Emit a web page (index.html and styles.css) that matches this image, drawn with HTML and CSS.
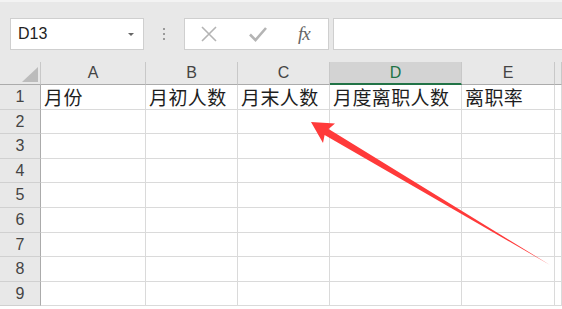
FILE: index.html
```html
<!DOCTYPE html>
<html lang="zh-CN">
<head>
  <meta charset="UTF-8" />
  <title>工作表</title>
  <link rel="stylesheet" href="styles.css">
</head>
<body>
  <div class="toolbar">
    <div class="namebox">
      <span>D13</span>
      <span class="caret"></span>
    </div>
    <div class="grip"><i></i><i></i><i></i></div>
    <div class="fxbox">
      <svg class="tool" width="18" height="18" viewBox="0 0 18 18"><path d="M2 2L16 16M16 2L2 16" stroke="#b4b4b4" stroke-width="1.6" fill="none"/></svg>
      <svg class="tool" width="20" height="18" viewBox="0 0 20 18"><path d="M2 9.5L7.5 15L18 3" stroke="#b4b4b4" stroke-width="2.6" fill="none"/></svg>
      <span class="fx">fx</span>
    </div>
    <div class="formula"></div>
  </div>

  <div class="sheet">
    <div class="corner"><span class="tri"></span></div>
    <div class="colhead">A</div>
    <div class="colhead">B</div>
    <div class="colhead">C</div>
    <div class="colhead active">D</div>
    <div class="colhead">E</div>
    <div class="colhead"></div>

    <div class="rowhead">1</div>
    <div class="cell">月份</div>
    <div class="cell">月初人数</div>
    <div class="cell">月末人数</div>
    <div class="cell">月度离职人数</div>
    <div class="cell">离职率</div>
    <div class="cell"></div>
  </div>

  <svg class="arrow" width="562" height="309" viewBox="0 0 562 309">
    <polygon points="311,122 335,123.5 328.6,129 550,265 324.6,135 323,143" fill="#ff3a3a"/>
  </svg>

  <script>
    // rows 2..9 are empty
    const sheet = document.querySelector('.sheet');
    for (let r = 2; r <= 9; r++) {
      let html = '<div class="rowhead">' + r + '</div>';
      for (let c = 0; c < 6; c++) html += '<div class="cell"></div>';
      sheet.insertAdjacentHTML('beforeend', html);
    }
  </script>
</body>
</html>
```

FILE: styles.css
```css
body {
  margin: 0;
  position: relative;
  width: 562px;
  height: 309px;
  overflow: hidden;
  background: #fff;
  font-family: "Liberation Sans", Arial, sans-serif;
}

.toolbar {
  display: flex;
  box-sizing: border-box;
  height: 62px;
  padding: 16px 0 14px 10px;
  background: #e8e8e8;
  border-top: 2px solid #f3f3f3;
}
.toolbar > div { box-sizing: border-box; height: 32px; }

.namebox {
  width: 134px;
  display: flex;
  align-items: center;
  justify-content: space-between;
  padding: 0 9px 0 7px;
  background: #fff;
  border: 1px solid #cfcfcf;
  font-size: 16px;
  color: #222;
}
.caret {
  width: 0;
  height: 0;
  border-left: 3.5px solid transparent;
  border-right: 3.5px solid transparent;
  border-top: 3.5px solid #666;
}

.grip {
  width: 40px;
  display: flex;
  flex-direction: column;
  align-items: center;
  justify-content: center;
  gap: 3px;
}
.grip i { width: 2px; height: 2px; background: #9a9a9a; }

.fxbox {
  width: 145px;
  display: flex;
  align-items: center;
  padding-left: 15px;
  background: #fff;
  border: 1px solid #cfcfcf;
}
.fxbox .tool:nth-child(2) { margin-left: 30px; }
.fx {
  margin-left: 30px;
  font-family: "Liberation Serif", "Times New Roman", serif;
  font-style: italic;
  font-size: 19px;
  color: #666;
  letter-spacing: -1px;
}

.formula {
  flex: 1;
  margin-left: 4px;
  background: #fff;
  border: 1px solid #cfcfcf;
  border-right: 0;
}

.sheet {
  display: grid;
  grid-template-columns: 41px 105px 92px 92px 132px 93px 1fr;
  grid-template-rows: 23px repeat(9, 24.6px);
}
.sheet > div { box-sizing: border-box; }

.corner {
  position: relative;
  background: #e8e8e8;
  border-right: 1px solid #c8c8c8;
  border-bottom: 1px solid #ababab;
}
.tri {
  position: absolute;
  right: 2px;
  bottom: 2px;
  width: 0;
  height: 0;
  border-left: 16px solid transparent;
  border-bottom: 15px solid #bcbcbc;
}

.colhead {
  background: #e8e8e8;
  border-right: 1px solid #c8c8c8;
  border-bottom: 1px solid #ababab;
  text-align: center;
  font-size: 16px;
  line-height: 22px;
  color: #444;
}
.colhead.active {
  background: #d3d3d3;
  color: #217346;
  border-bottom: 2px solid #217346;
}

.rowhead {
  background: #e8e8e8;
  border-right: 1px solid #ababab;
  border-bottom: 1px solid #d0d0d0;
  text-align: center;
  font-size: 16px;
  line-height: 24px;
  color: #444;
}

.cell {
  border-right: 1px solid #dadada;
  border-bottom: 1px solid #dadada;
  padding: 0 0 0 3px;
  font-family: "Noto Sans CJK SC", sans-serif;
  font-size: 19px;
  line-height: 23px;
  letter-spacing: 0.4px;
  color: #1e1e1e;
  white-space: nowrap;
}

.arrow {
  position: absolute;
  left: 0;
  top: 0;
  pointer-events: none;
}
```
